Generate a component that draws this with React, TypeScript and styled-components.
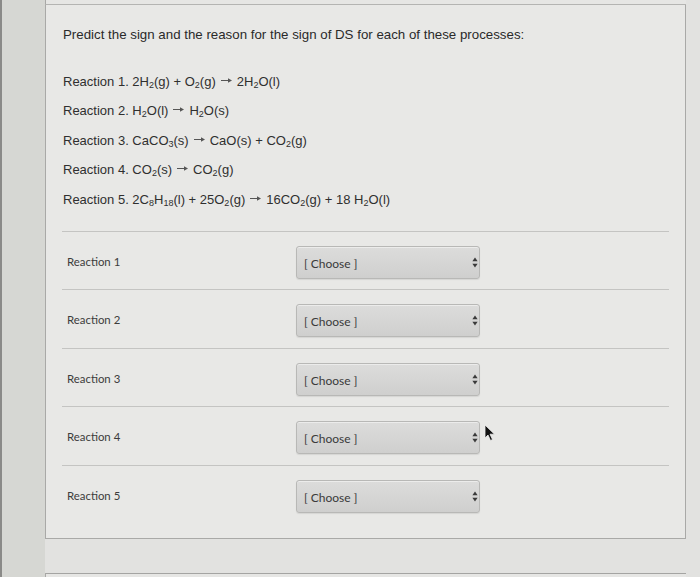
import React from "react";
import styled, { createGlobalStyle } from "styled-components";

const Global = createGlobalStyle`
  html, body {
    margin: 0;
    padding: 0;
    background: #dcdcd9;
  }
  body {
    font-family: "Liberation Sans", Arial, sans-serif;
    color: #2e2e2e;
  }
`;

const Page = styled.div`
  position: relative;
  width: 700px;
  height: 577px;
  overflow: hidden;
  display: flex;
  flex-direction: column;
  padding: 0 14px 0 45px;
  box-sizing: border-box;
  background: linear-gradient(90deg, #8a8a88 0, #8a8a88 2px, #d6d7d3 2px, #d6d7d3 45px, #e2e2e0 45px);
`;

const PrevPanelEdge = styled.div`
  height: 4px;
  flex: none;
  background: #e6e6e4;
  border-left: 1px solid #a8a8a6;
  border-bottom: 1px solid #b4b4b2;
`;

const Panel = styled.section`
  flex: none;
  height: 534px;
  box-sizing: border-box;
  background: #e8e8e6;
  border: 1px solid #a9a9a7;
  border-top: none;
  padding: 21px 16px 0 16px;
  display: flex;
  flex-direction: column;
`;

const Question = styled.div`
  padding-left: 1px;
  display: flex;
  flex-direction: column;
  gap: 12.5px;
`;

const Prompt = styled.p`
  margin: 0 0 17px 0;
  height: 17px;
  font-size: 13.3px;
  line-height: 17px;
  color: #2a2a2a;
`;

const Equation = styled.p`
  margin: 0;
  height: 17px;
  font-size: 13px;
  line-height: 17px;
  color: #2f2f2f;
  white-space: nowrap;
`;

const Sub = styled.sub`
  font-size: 9px;
  vertical-align: -2px;
  line-height: 0;
`;

const ArrowSvg = styled.svg`
  margin: 0 5px;
  vertical-align: 3px;
`;

const Arrow = () => (
  <ArrowSvg width="11" height="5" viewBox="0 0 11 5" aria-label="yields">
    <path d="M0 2.5 H8.5" stroke="#555" strokeWidth="1" />
    <path d="M7 0.3 L11 2.5 L7 4.7 Z" fill="#555" />
  </ArrowSvg>
);

const Answers = styled.div`
  margin-top: 23px;
  display: flex;
  flex-direction: column;
`;

const AnswerRow = styled.div`
  display: grid;
  grid-template-columns: 234px 184px 1fr;
  align-items: center;
  border-top: 1px solid #c4c4c2;
  padding: 14px 0 10.5px 0;
`;

const RowLabel = styled.span`
  padding-left: 5px;
  font-family: Lato, "Open Sans", sans-serif;
  font-size: 11.4px;
  color: #3c3c3c;
  transform: translateY(-1px);
`;

const SelectBox = styled.div`
  height: 33px;
  box-sizing: border-box;
  display: flex;
  align-items: center;
  justify-content: space-between;
  padding: 0 1px 0 7px;
  border: 1px solid #b8b8b6;
  border-radius: 3px;
  background: linear-gradient(180deg, #dcdcdb 0%, #d5d5d4 55%, #cfcfce 100%);
  box-shadow: inset 0 1px 0 rgba(255, 255, 255, 0.45), 0 1px 1px rgba(0, 0, 0, 0.08);
  font-family: Lato, "Open Sans", sans-serif;
  font-size: 12px;
  color: #3a3a3a;
`;

const Placeholder = styled.span`
  transform: translateY(1px);
`;

const NextPanelEdge = styled.div`
  margin-top: 34px;
  flex: 1;
  background: #e6e6e4;
  border-left: 1px solid #a9a9a7;
  border-top: 1px solid #a4a4a2;
`;

const Pointer = styled.svg`
  position: absolute;
  left: 484px;
  top: 424px;
`;

const Stepper = () => (
  <svg width="6" height="11" viewBox="0 0 6 11">
    <path d="M3 0.5 L5.6 4.3 H0.4 Z" fill="#3a3a3a" />
    <path d="M3 10.5 L5.6 6.7 H0.4 Z" fill="#3a3a3a" />
  </svg>
);

const reactions = [1, 2, 3, 4, 5];

export default function App() {
  return (
    <>
      <Global />
      <Page>
        <PrevPanelEdge />
        <Panel>
          <Question>
            <Prompt>Predict the sign and the reason for the sign of DS for each of these processes:</Prompt>
            <Equation>
              Reaction 1. 2H<Sub>2</Sub>(g) + O<Sub>2</Sub>(g)<Arrow />2H<Sub>2</Sub>O(l)
            </Equation>
            <Equation>
              Reaction 2. H<Sub>2</Sub>O(l)<Arrow />H<Sub>2</Sub>O(s)
            </Equation>
            <Equation>
              Reaction 3. CaCO<Sub>3</Sub>(s)<Arrow />CaO(s) + CO<Sub>2</Sub>(g)
            </Equation>
            <Equation>
              Reaction 4. CO<Sub>2</Sub>(s)<Arrow />CO<Sub>2</Sub>(g)
            </Equation>
            <Equation>
              Reaction 5. 2C<Sub>8</Sub>H<Sub>18</Sub>(l) + 25O<Sub>2</Sub>(g)<Arrow />16CO<Sub>2</Sub>(g) + 18 H<Sub>2</Sub>O(l)
            </Equation>
          </Question>
          <Answers>
            {reactions.map((n) => (
              <AnswerRow key={n}>
                <RowLabel>Reaction {n}</RowLabel>
                <SelectBox role="combobox" aria-label={`Reaction ${n}`}>
                  <Placeholder>[ Choose ]</Placeholder>
                  <Stepper />
                </SelectBox>
                <span />
              </AnswerRow>
            ))}
          </Answers>
        </Panel>
        <NextPanelEdge />
        <Pointer width="12" height="18" viewBox="0 0 12 18">
          <path d="M1 1 L1 14 L4 11 L6.5 16.5 L8.5 15.5 L6 10.2 L10.5 10.2 Z" fill="#111" stroke="#eee" strokeWidth="0.8" />
        </Pointer>
      </Page>
    </>
  );
}
